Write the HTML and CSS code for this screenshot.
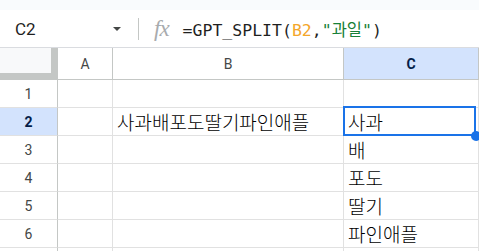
FILE: index.html
```html
<!DOCTYPE html>
<html lang="ko">
<head>
    <meta charset="UTF-8">
    <title>GPT_SPLIT</title>
    <link rel="stylesheet" href="styles.css">
</head>
<body>
    <div class="topband"></div>

    <div class="toolbar">
        <div class="namebox">
            <span class="ref">C2</span>
            <span class="caret"></span>
        </div>
        <div class="divider"></div>
        <span class="fx">fx</span>
        <div class="formula">=GPT_SPLIT(<span class="arg">B2</span>,<span class="str">"과일"</span>)</div>
    </div>

    <div class="sheet">
        <div class="corner"></div>
        <div class="colhead">A</div>
        <div class="colhead">B</div>
        <div class="colhead active">C</div>

        <div class="rowhead">1</div>
        <div class="cell"></div>
        <div class="cell"></div>
        <div class="cell"></div>

        <div class="rowhead active">2</div>
        <div class="cell"></div>
        <div class="cell">사과배포도딸기파인애플</div>
        <div class="cell selected">사과<span class="handle"></span></div>

        <div class="rowhead">3</div>
        <div class="cell"></div>
        <div class="cell"></div>
        <div class="cell">배</div>

        <div class="rowhead">4</div>
        <div class="cell"></div>
        <div class="cell"></div>
        <div class="cell">포도</div>

        <div class="rowhead">5</div>
        <div class="cell"></div>
        <div class="cell"></div>
        <div class="cell">딸기</div>

        <div class="rowhead">6</div>
        <div class="cell"></div>
        <div class="cell"></div>
        <div class="cell">파인애플</div>

        <div class="rowhead"></div>
        <div class="cell"></div>
        <div class="cell"></div>
        <div class="cell"></div>
    </div>
</body>
</html>
```

FILE: styles.css
```css
body {
    margin: 0;
    overflow: hidden;
    background-color: #fff;
    font-family: Roboto, 'Liberation Sans', 'Noto Sans CJK KR', sans-serif;
    color: #1f1f1f;
}

.topband {
    height: 10px;
    background-color: #f9fbfd;
}

.toolbar {
    display: flex;
    align-items: center;
    height: 37px;
    padding-left: 15px;
    border-bottom: 1px solid #dadce0;
}

.namebox {
    display: flex;
    align-items: center;
    justify-content: space-between;
    width: 106px;
}

.ref {
    font-size: 17px;
    color: #1f1f1f;
}

.caret {
    width: 0;
    height: 0;
    border-left: 4px solid transparent;
    border-right: 4px solid transparent;
    border-top: 4px solid #444746;
}

.divider {
    width: 1px;
    height: 22px;
    margin-left: 17px;
    background-color: #c4c7c5;
}

.fx {
    margin-left: 15px;
    font-family: 'Liberation Serif', serif;
    font-style: italic;
    font-size: 23px;
    line-height: 1;
    color: #a8abae;
    letter-spacing: -1px;
}

.formula {
    margin-left: 14px;
    font-family: 'DejaVu Sans Mono', 'Noto Sans CJK KR', monospace;
    font-size: 16.5px;
    color: #1f1f1f;
}

.arg {
    color: #f4a62a;
}

.str {
    color: #188038;
}

.sheet {
    display: grid;
    grid-template-columns: 58px 55px 231px 1fr;
    grid-template-rows: 32px;
    grid-auto-rows: 28px;
}

.corner {
    background-color: #f8f9fa;
    border-right: 1px solid #c4c7c5;
    border-bottom: 1px solid #c4c7c5;
    box-shadow: inset -6px -6px 0 #c4c7c5;
}

.colhead,
.rowhead {
    display: flex;
    align-items: center;
    justify-content: center;
    font-size: 14px;
    color: #444746;
    border-right: 1px solid #c4c7c5;
    border-bottom: 1px solid #c4c7c5;
}

.rowhead {
    border-bottom-color: #e1e1e1;
}

.colhead.active,
.rowhead.active {
    background-color: #d3e3fd;
    color: #041e49;
    font-weight: bold;
}

.cell {
    position: relative;
    display: flex;
    align-items: center;
    padding-left: 4px;
    font-family: 'Noto Sans CJK KR', sans-serif;
    font-size: 19px;
    font-weight: 300;
    color: #000;
    white-space: nowrap;
    border-right: 1px solid #e1e1e1;
    border-bottom: 1px solid #e1e1e1;
}

.selected::after {
    content: '';
    position: absolute;
    top: -2px;
    left: -1px;
    right: 2px;
    bottom: -1px;
    border: 2px solid #1a73e8;
}

.handle {
    position: absolute;
    right: -3px;
    bottom: -6px;
    width: 10px;
    height: 10px;
    border-radius: 50%;
    background-color: #1a73e8;
    z-index: 1;
}
```
